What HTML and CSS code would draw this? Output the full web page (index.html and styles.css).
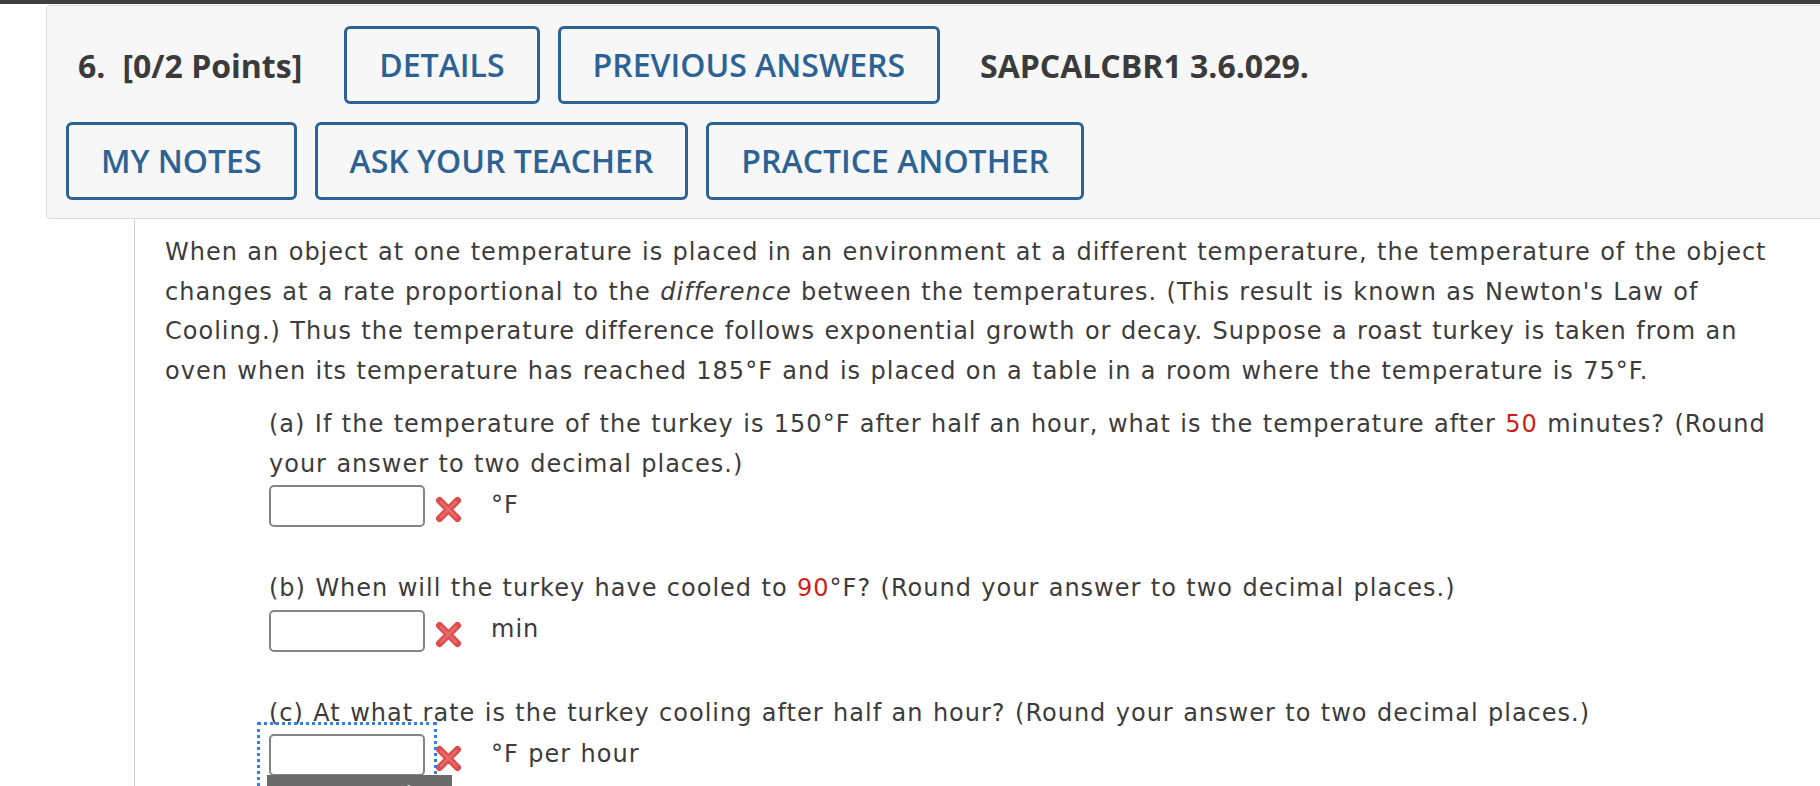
FILE: index.html
```html
<!DOCTYPE html>
<html lang="en">
<head>
<meta charset="utf-8">
<title>Question 6</title>
<link rel="stylesheet" href="styles.css">
</head>
<body>
<div class="topbar"></div>
<div class="panel">
  <div class="row">
    <div class="qtitle"><span class="qnum">6.</span><span>[0/2 Points]</span></div>
    <button class="btn">DETAILS</button>
    <button class="btn">PREVIOUS ANSWERS</button>
    <div class="qcode">SAPCALCBR1 3.6.029.</div>
  </div>
  <div class="row">
    <button class="btn">MY NOTES</button>
    <button class="btn">ASK YOUR TEACHER</button>
    <button class="btn">PRACTICE ANOTHER</button>
  </div>
</div>
<div class="question">
  <p class="intro">When an object at one temperature is placed in an environment at a different temperature, the temperature of the object changes at a rate proportional to the <em>difference</em> between the temperatures. (This result is known as Newton's Law of Cooling.) Thus the temperature difference follows exponential growth or decay. Suppose a roast turkey is taken from an oven when its temperature has reached 185°F and is placed on a table in a room where the temperature is 75°F.</p>

  <div class="part">
    <p class="ptext">(a) If the temperature of the turkey is 150°F after half an hour, what is the temperature after <span class="red">50</span> minutes? (Round your answer to two decimal places.)</p>
    <div class="answer">
      <span class="field"><input type="text" class="inp"></span>
      <svg class="xmark" viewBox="0 0 27 27" width="27" height="27"><path d="M4.5 4.5 L22.5 22.5 M22.5 4.5 L4.5 22.5" stroke="#df4c4c" stroke-width="7" stroke-linecap="round"/><path d="M6 6 L21 21 M21 6 L6 21" stroke="#ea7272" stroke-width="2.5" stroke-linecap="round" opacity="0.8"/></svg>
      <span class="unit">°F</span>
    </div>
  </div>

  <div class="part">
    <p class="ptext">(b) When will the turkey have cooled to <span class="red">90</span>°F? (Round your answer to two decimal places.)</p>
    <div class="answer">
      <span class="field"><input type="text" class="inp"></span>
      <svg class="xmark" viewBox="0 0 27 27" width="27" height="27"><path d="M4.5 4.5 L22.5 22.5 M22.5 4.5 L4.5 22.5" stroke="#df4c4c" stroke-width="7" stroke-linecap="round"/><path d="M6 6 L21 21 M21 6 L6 21" stroke="#ea7272" stroke-width="2.5" stroke-linecap="round" opacity="0.8"/></svg>
      <span class="unit">min</span>
    </div>
  </div>

  <div class="part">
    <p class="ptext">(c) At what rate is the turkey cooling after half an hour? (Round your answer to two decimal places.)</p>
    <div class="answer">
      <span class="field focused"><input type="text" class="inp"><span class="tip">Enter a number.</span></span>
      <svg class="xmark" viewBox="0 0 27 27" width="27" height="27"><path d="M4.5 4.5 L22.5 22.5 M22.5 4.5 L4.5 22.5" stroke="#df4c4c" stroke-width="7" stroke-linecap="round"/><path d="M6 6 L21 21 M21 6 L6 21" stroke="#ea7272" stroke-width="2.5" stroke-linecap="round" opacity="0.8"/></svg>
      <span class="unit">°F per hour</span>
    </div>
  </div>
</div>
</body>
</html>
```

FILE: styles.css
```css
html, body {
  margin: 0;
  padding: 0;
  background: #ffffff;
  overflow: hidden;
  height: 786px;
}

.topbar {
  height: 4px;
  background: #3e3e3e;
}

.panel {
  margin: 1px -12px 0 46px;
  background: #f7f7f7;
  border: 1px solid #dcdcdc;
  border-radius: 4px;
  padding: 20px 0 18px 19px;
  display: flex;
  flex-direction: column;
  gap: 18px;
}

.row {
  display: flex;
  align-items: center;
  gap: 18px;
}

.qtitle, .qcode {
  font-family: "Open Sans", "Liberation Sans", sans-serif;
  font-weight: 700;
  font-size: 32px;
  color: #3b3b3b;
  white-space: nowrap;
}

.qtitle {
  margin-left: 12px;
  margin-right: 24px;
}

.qnum {
  margin-right: 17px;
}

.qcode {
  margin-left: 22px;
}

.btn {
  box-sizing: border-box;
  height: 78px;
  padding: 0 32px 2px;
  margin: 0;
  background: transparent;
  border: 3px solid #2c6394;
  border-radius: 6px;
  font-family: "Open Sans", "Liberation Sans", sans-serif;
  font-weight: 600;
  font-size: 32px;
  color: #2c6394;
  white-space: nowrap;
  cursor: pointer;
}

.question {
  margin-left: 134px;
  border-left: 1px solid #cccccc;
  padding: 14px 25px 0 30px;
  height: 600px;
  font-family: "DejaVu Sans", Verdana, sans-serif;
  font-size: 24px;
  line-height: 39.5px;
  letter-spacing: 1px;
  word-spacing: 0.8px;
  color: #3c3c3c;
}

.intro {
  margin: 0;
}

.intro em {
  font-style: italic;
}

.part {
  margin: 14px 0 0 104px;
}

.part + .part {
  margin-top: 42px;
}

.ptext {
  margin: 0;
}

.red {
  color: #cf1f1b;
}

.answer {
  display: flex;
  align-items: flex-end;
  height: 42px;
  margin-top: 1px;
}

.field {
  position: relative;
  display: block;
  height: 42px;
}

.inp {
  box-sizing: border-box;
  display: block;
  width: 156px;
  height: 42px;
  margin: 0;
  border: 2px solid #858585;
  border-radius: 5px;
  background: #ffffff;
  font: inherit;
  padding: 0 6px;
}

.focused::before {
  content: "";
  position: absolute;
  left: -12px;
  top: -12px;
  right: -12px;
  bottom: -40px;
  border: 3px dotted #3a7de2;
  pointer-events: none;
}

.tip {
  position: absolute;
  left: -2px;
  top: 41px;
  width: 185px;
  height: 40px;
  box-sizing: border-box;
  padding: 6px 0 0 14px;
  background: #6a6a6a;
  color: #ffffff;
  font-size: 20px;
  line-height: 24px;
  letter-spacing: 0;
  white-space: nowrap;
  overflow: hidden;
}

.xmark {
  display: block;
  margin: 0 0 4px 10px;
  flex: none;
}

.unit {
  margin-left: 29px;
  line-height: 39.5px;
  margin-bottom: 2px;
}
```
